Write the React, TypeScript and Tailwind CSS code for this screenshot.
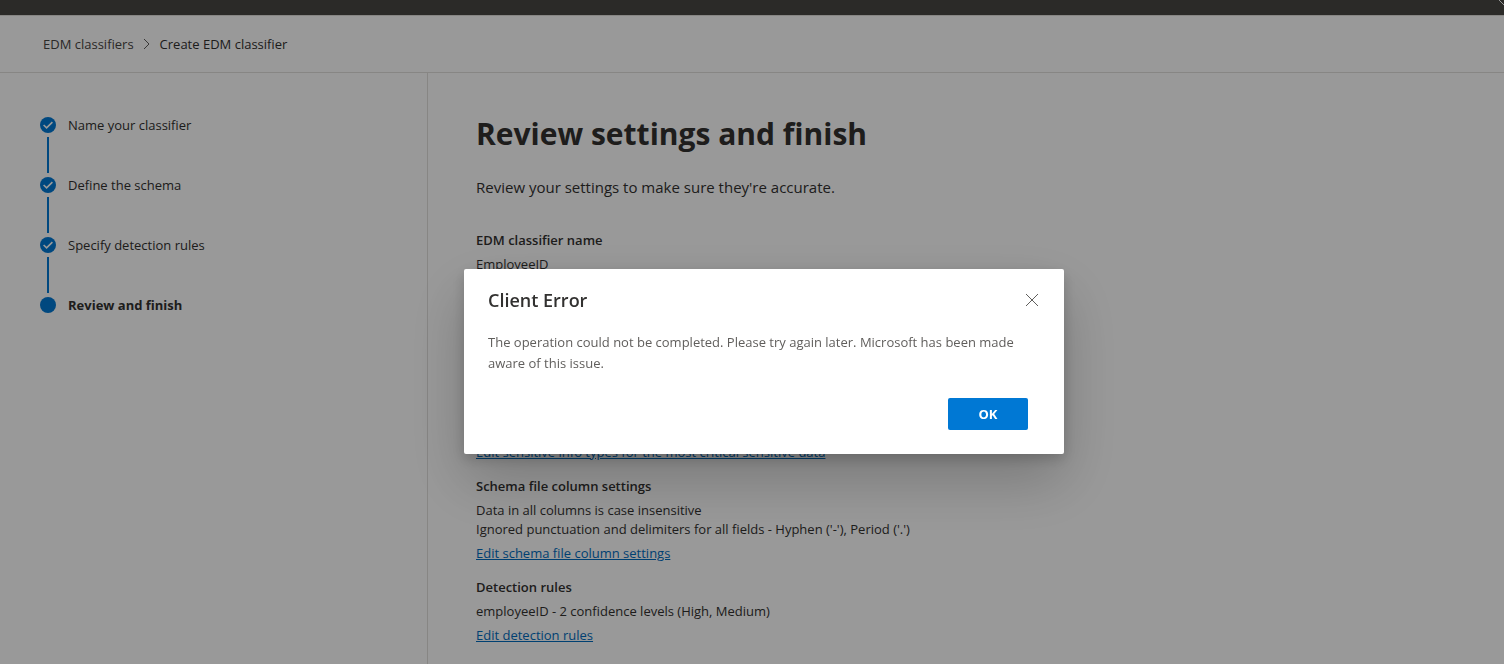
import { useState } from "react";

type Step = {
  label: string;
  done: boolean;
};

const steps: Step[] = [
  { label: "Name your classifier", done: true },
  { label: "Define the schema", done: true },
  { label: "Specify detection rules", done: true },
  { label: "Review and finish", done: false },
];

const StepItem = ({ step, last }: { step: Step; last: boolean }) => {
  return (
    <li className="flex gap-3">
      <div className="flex flex-col items-center gap-1">
        <svg viewBox="0 0 16 16" className="h-4 w-4" aria-hidden="true">
          <circle cx="8" cy="8" r="8" fill="#0078d4" />
          {step.done && (
            <path
              d="M3.6 8l3 2.9 5.8-5.8"
              fill="none"
              stroke="#fff"
              strokeWidth="1.6"
            />
          )}
        </svg>
        {!last && <div className="mb-1 h-9 w-0.5 bg-[#0078d4]" />}
      </div>
      <span className={step.done ? "leading-4" : "font-bold leading-4"}>
        {step.label}
      </span>
    </li>
  );
};

const EditLink = ({ children }: { children: string }) => {
  return (
    <a href="#" className="block w-fit text-[#006cbe] underline">
      {children}
    </a>
  );
};

const ErrorDialog = ({ onClose }: { onClose: () => void }) => {
  return (
    <div className="fixed inset-0 flex items-center justify-center bg-black/40 pt-[59px] pl-6">
      <div
        role="alertdialog"
        aria-modal="true"
        aria-labelledby="dialog-title"
        aria-describedby="dialog-text"
        className="w-full max-w-[600px] rounded-xs bg-white px-6 pt-[15px] pb-6 shadow-[0_26px_58px_rgba(0,0,0,0.22),0_5px_14px_rgba(0,0,0,0.18)]"
      >
        <div className="flex items-center justify-between">
          <h2
            id="dialog-title"
            className="text-lg leading-8 font-semibold text-[#323130]"
          >
            Client Error
          </h2>
          <button
            type="button"
            aria-label="Close"
            onClick={onClose}
            className="flex h-8 w-4 items-center justify-center"
          >
            <svg viewBox="0 0 14 14" className="h-3.5 w-3.5">
              <path d="M1 1l12 12M13 1L1 13" stroke="#605e5c" strokeWidth="1" />
            </svg>
          </button>
        </div>

        <p id="dialog-text" className="mt-4 leading-[21px] text-[#605e5c]">
          The operation could not be completed. Please try again later.
          Microsoft has been made aware of this issue.
        </p>

        <div className="mt-6 flex justify-end pr-3">
          <button
            type="button"
            onClick={onClose}
            className="h-8 w-20 rounded-xs bg-[#0078d4] font-bold text-white"
          >
            OK
          </button>
        </div>
      </div>
    </div>
  );
};

const App = () => {
  const [open, setOpen] = useState(true);

  return (
    <div className="flex min-h-screen flex-col bg-white font-['Open_Sans',sans-serif] text-[13px] leading-[19px] text-[#323130]">
      {/* Top bar */}
      <div className="flex h-[15px] items-start justify-end bg-[#484644]">
        <svg viewBox="0 0 5 5" className="h-[5px] w-[5px]" aria-hidden="true">
          <path d="M0 0l5 5" stroke="#fff" strokeWidth="1" />
        </svg>
      </div>

      {/* Breadcrumb */}
      <header className="border-y border-[#e1dfdd] px-[43px] py-[18px]">
        <nav
          aria-label="Breadcrumb"
          className="flex items-center gap-2 leading-5"
        >
          <a href="#" className="text-[#484644]">
            EDM classifiers
          </a>
          <svg viewBox="0 0 10 12" className="h-3 w-2.5" aria-hidden="true">
            <path d="M2 1l5 5-5 5" fill="none" stroke="#605e5c" />
          </svg>
          <span>Create EDM classifier</span>
        </nav>
      </header>

      <div className="flex flex-1">
        <aside className="w-[428px] shrink-0 border-r border-[#e1dfdd] px-10 pt-11">
          <ol>
            {steps.map((step, i) => (
              <StepItem
                key={step.label}
                step={step}
                last={i === steps.length - 1}
              />
            ))}
          </ol>
        </aside>

        <main className="flex-1 px-12 pt-10">
          <h1 className="text-[30px] leading-[42px] font-bold">
            Review settings and finish
          </h1>
          <p className="mt-5 text-[15px] leading-6">
            Review your settings to make sure they're accurate.
          </p>

          <section className="mt-8">
            <h2 className="font-semibold">EDM classifier name</h2>
            <p className="mt-[5px]">EmployeeID</p>
          </section>

          <section className="mt-[169px]">
            <EditLink>
              Edit sensitive info types for the most critical sensitive data
            </EditLink>
          </section>

          <section className="mt-[15px]">
            <h2 className="mb-[5px] font-semibold">
              Schema file column settings
            </h2>
            <p>Data in all columns is case insensitive</p>
            <p className="mb-[5px]">
              Ignored punctuation and delimiters for all fields - Hyphen ('-'),
              Period ('.')
            </p>
            <EditLink>Edit schema file column settings</EditLink>
          </section>

          <section className="mt-[15px]">
            <h2 className="mb-[5px] font-semibold">Detection rules</h2>
            <p className="mb-[5px]">
              employeeID - 2 confidence levels (High, Medium)
            </p>
            <EditLink>Edit detection rules</EditLink>
          </section>
        </main>
      </div>

      {open && <ErrorDialog onClose={() => setOpen(false)} />}
    </div>
  );
};

export default App;
